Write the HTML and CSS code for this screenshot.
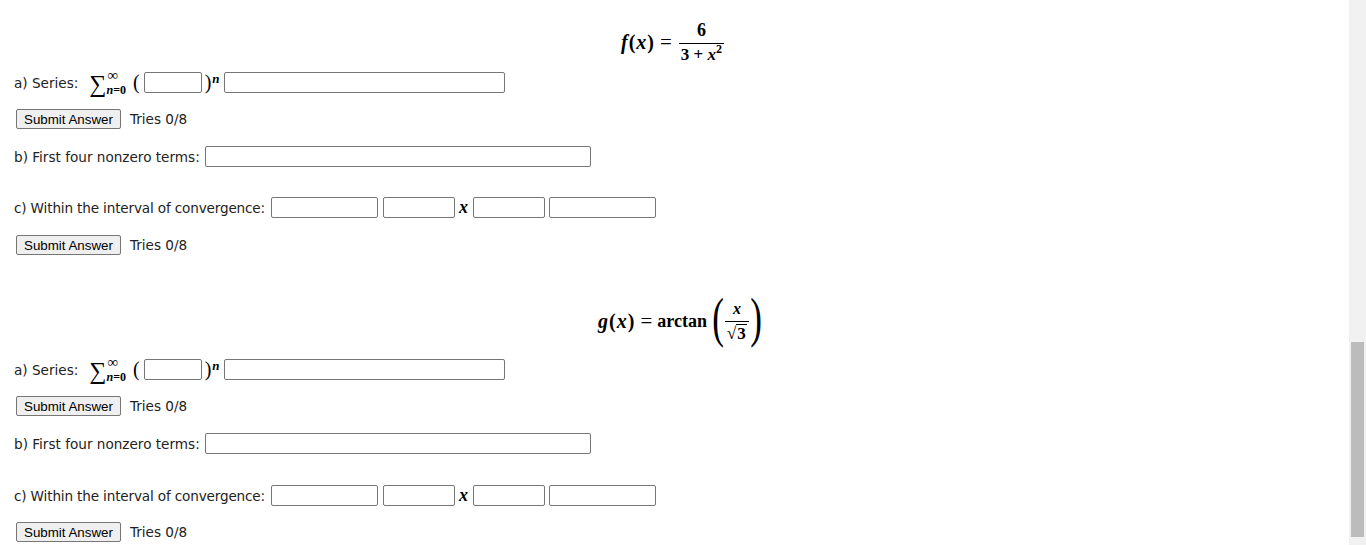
FILE: index.html
```html
<!DOCTYPE html>
<html>
<head>
<meta charset="utf-8">
<link rel="stylesheet" href="styles.css">
</head>
<body>
<div class="page">
  <div class="formula f1">
    <span class="mi">f</span><span class="mo">(</span><span class="mi">x</span><span class="mo">)</span><span class="eq">=</span>
    <span class="frac"><span class="num">6</span><span class="den">3 + <span class="mi">x</span><sup class="sq">2</sup></span></span>
  </div>

  <div class="row r-a1">
    <span class="label">a) Series:</span>
    <span class="sum"><span class="sigma">∑</span><span class="limits"><span class="up">∞</span><span class="lo"><span class="mi">n</span>=0</span></span></span>
    <span class="paren po">(</span><input class="inp w58"><span class="paren pc">)</span><sup class="pow mi">n</sup><input class="inp w281">
  </div>
  <div class="row r-s1">
    <button class="btn">Submit Answer</button><span class="tries">Tries 0/8</span>
  </div>
  <div class="row r-b1">
    <span class="label">b) First four nonzero terms:</span><input class="inp w386">
  </div>
  <div class="row r-c1">
    <span class="label lc">c) Within the interval of convergence:</span><input class="inp w107"><input class="inp w72"><span class="xvar mi">x</span><input class="inp w72 nx"><input class="inp w107">
  </div>
  <div class="row r-s2">
    <button class="btn">Submit Answer</button><span class="tries">Tries 0/8</span>
  </div>

  <div class="formula f2">
    <span class="mi">g</span><span class="mo">(</span><span class="mi">x</span><span class="mo">)</span><span class="eq">=</span><span class="fn">arctan</span>
    <span class="bigp">(</span><span class="frac small"><span class="num"><span class="mi">x</span></span><span class="den"><span class="rad">√</span><span class="radicand">3</span></span></span><span class="bigp">)</span>
  </div>

  <div class="row r-a2">
    <span class="label">a) Series:</span>
    <span class="sum"><span class="sigma">∑</span><span class="limits"><span class="up">∞</span><span class="lo"><span class="mi">n</span>=0</span></span></span>
    <span class="paren po">(</span><input class="inp w58"><span class="paren pc">)</span><sup class="pow mi">n</sup><input class="inp w281">
  </div>
  <div class="row r-s3">
    <button class="btn">Submit Answer</button><span class="tries">Tries 0/8</span>
  </div>
  <div class="row r-b2">
    <span class="label">b) First four nonzero terms:</span><input class="inp w386">
  </div>
  <div class="row r-c2">
    <span class="label lc">c) Within the interval of convergence:</span><input class="inp w107"><input class="inp w72"><span class="xvar mi">x</span><input class="inp w72 nx"><input class="inp w107">
  </div>
  <div class="row r-s4">
    <button class="btn">Submit Answer</button><span class="tries">Tries 0/8</span>
  </div>
</div>
<div class="scrollbar"><div class="thumb"></div></div>
</body>
</html>
```
FILE: styles.css
```css
html, body {
  margin: 0;
  padding: 0;
  overflow: hidden;
  background: #fff;
}
body {
  width: 1366px;
  height: 545px;
  font-family: "DejaVu Sans", Verdana, sans-serif;
  font-size: 13.6px;
  color: #222;
}
.page {
  width: 1349px;
  padding-left: 14px;
  box-sizing: border-box;
}
.row {
  display: flex;
  align-items: center;
  height: 25px;
}
.label {
  white-space: pre;
  margin-right: 5px;
}
.label.lc {
  letter-spacing: -0.16px;
  margin-right: 6px;
}
.inp {
  box-sizing: border-box;
  height: 21px;
  border: 1px solid #767676;
  border-radius: 2px;
  background: #fff;
  margin: 0;
  padding: 0;
}
.w58 { width: 58px; }
.w281 { width: 281px; }
.w386 { width: 386px; }
.w107 { width: 107px; }
.w72 { width: 72px; }
.r-c1 .inp, .r-c2 .inp { margin-right: 5px; }
.r-c1 .nx, .r-c2 .nx { margin-right: 4px; }

.mi { font-style: italic; }
.sum {
  display: inline-flex;
  align-items: center;
  font-family: "Liberation Serif", "DejaVu Serif", serif;
  color: #000;
  margin-left: 6px;
  margin-right: 7px;
}
.sigma { font-size: 24px; line-height: 1; position: relative; top: 1px; }
.limits {
  display: inline-flex;
  flex-direction: column;
  font-size: 12px;
  line-height: 9px;
  margin-left: 0;
}
.up { font-size: 15px; line-height: 9px; position: relative; top: -3px; left: 1px; }
.lo { position: relative; top: 3px; font-weight: bold; }
.paren {
  font-family: "Liberation Serif", serif;
  font-size: 20px;
  color: #000;
}
.po { margin-right: 4px; }
.pc { margin-left: 3px; }
.pow {
  font-family: "Liberation Serif", serif;
  font-size: 13px;
  font-weight: bold;
  color: #000;
  align-self: flex-start;
  margin-top: 1px;
  margin-right: 4px;
  margin-left: 1px;
}
.xvar {
  font-family: "Liberation Serif", serif;
  font-size: 18px;
  font-weight: bold;
  color: #000;
  margin: 0 5px 0 -1px;
}
.btn {
  font-family: "Liberation Sans", Arial, sans-serif;
  font-size: 13.33px;
  height: 20px;
  padding: 0 7px;
  margin-left: 2px;
  border: 1px solid #767676;
  border-radius: 2px;
  background: #efefef;
  color: #000;
}
.tries { margin-left: 9px; }

.formula {
  display: flex;
  align-items: center;
  justify-content: center;
  font-family: "Liberation Serif", "DejaVu Serif", serif;
  font-size: 20px;
  color: #000;
  height: 56px;
  font-weight: bold;
}
.formula .mi { font-weight: bold; }
.formula .mo { margin: 0 1px; }
.eq { margin: 0 5px 0 5px; font-weight: normal; font-size: 21px; }
.frac {
  display: inline-flex;
  flex-direction: column;
  align-items: center;
  margin-left: 2px;
}
.frac .num {
  padding: 0 3px 3px;
  border-bottom: 1px solid #000;
  align-self: stretch;
  text-align: center;
  font-size: 18px;
  line-height: 19px;
}
.f1 { padding-right: 18px; }
.f1 .frac .den { padding: 2px 2px 0; white-space: pre; font-size: 17px; line-height: 18px; }
.sq { font-size: 12px; vertical-align: 7px; line-height: 0; }
.fn { margin-right: 2px; font-size: 18px; }
.bigp {
  font-size: 54px;
  font-weight: 300;
  line-height: 1;
  position: relative;
  top: -3px;
  transform: scaleX(0.65);
}
.frac.small { margin: 0 -2px; }
.frac.small .num { padding: 0 8px 3px; font-size: 16px; }
.frac.small .den { font-size: 17px; display: inline-flex; align-items: flex-start; padding-top: 2px; }
.rad { font-weight: normal; font-size: 17px; }
.radicand { border-top: 1px solid #000; line-height: 17px; padding: 0 1px; }

.f1 { margin-top: 14px; }
.r-s1 { margin-top: 12px; height: 24px; }
.r-b1 { margin-top: 13px; }
.r-c1 { margin-top: 26px; }
.r-s2 { margin-top: 13px; height: 24px; }
.f2 { margin-top: 36px; }
.r-a2 { margin-top: 8px; }
.r-s3 { margin-top: 12px; height: 24px; }
.r-b2 { margin-top: 13px; }
.r-c2 { margin-top: 27px; }
.r-s4 { margin-top: 12px; height: 24px; }

.scrollbar {
  position: fixed;
  top: 0;
  right: 0;
  width: 17px;
  height: 545px;
  background: #f1f1f1;
}
.thumb {
  position: absolute;
  left: 2px;
  top: 342px;
  width: 13px;
  height: 195px;
  background: #bcbcbc;
}
```
